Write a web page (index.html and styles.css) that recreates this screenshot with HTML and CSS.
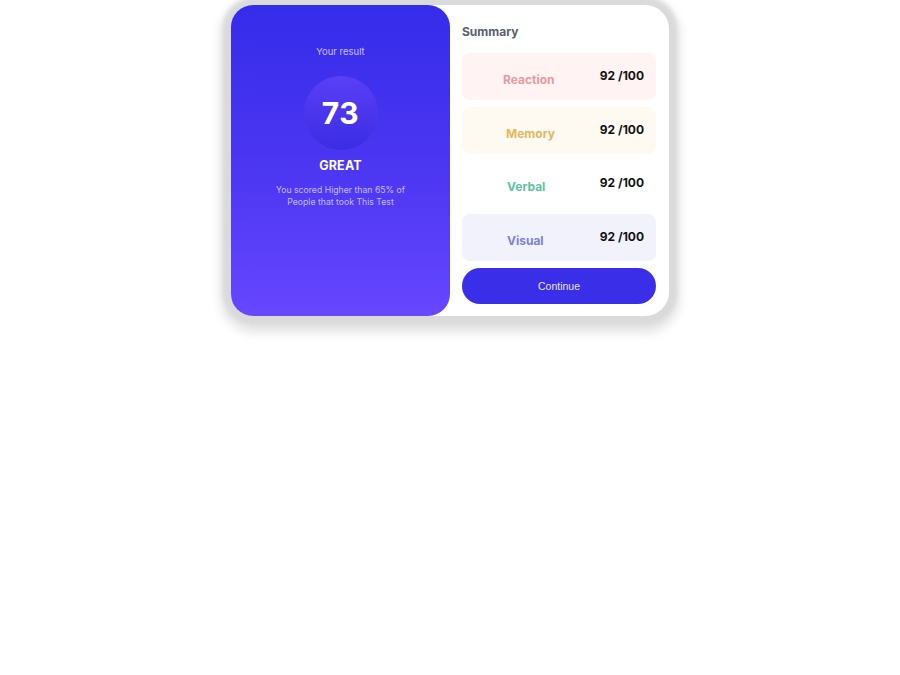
FILE: index.html
```html
<!DOCTYPE html>
<html>
<head>
<meta charset="utf-8">
<link rel="stylesheet" href="styles.css">
</head>
<body>
<div class="card">
  <section class="result">
    <p class="result-title">Your result</p>
    <div class="circle"><span class="score">73</span></div>
    <h2 class="grade">GREAT</h2>
    <p class="desc">You scored Higher than 65% of<br>People that took This Test</p>
  </section>
  <section class="summary">
    <h3 class="summary-title">Summary</h3>
    <div class="rows">
      <div class="row row-reaction"><span class="label">Reaction</span><span class="value">92 /100</span></div>
      <div class="row row-memory"><span class="label">Memory</span><span class="value">92 /100</span></div>
      <div class="row row-verbal"><span class="label">Verbal</span><span class="value">92 /100</span></div>
      <div class="row row-visual"><span class="label">Visual</span><span class="value">92 /100</span></div>
    </div>
    <button class="continue">Continue</button>
  </section>
</div>
</body>
</html>
```
FILE: styles.css
```css
* { box-sizing: border-box; }
html, body { margin: 0; padding: 0; background: #fff; }
body {
  font-family: "Inter", "Lato", sans-serif;
  min-height: 100vh;
  padding-top: 5px;
}

.card {
  width: 438px;
  height: 311px;
  margin: 0 auto;
  background: #fff;
  border-radius: 24px;
  display: flex;
  box-shadow: 0 0 4px 8px #dadada, 0 6px 12px 10px #e0e0e0;
}

.result {
  width: 219px;
  height: 100%;
  border-radius: 22px;
  background: linear-gradient(180deg, #352ce9 0%, #4d37f3 55%, #6747ff 100%);
  display: flex;
  flex-direction: column;
  align-items: center;
  color: #fff;
  padding-top: 40px;
}
.result-title {
  margin: 0;
  font-size: 9.5px;
  line-height: 13px;
  color: #c6c0ff;
}
.circle {
  margin-top: 18px;
  width: 74px;
  height: 74px;
  border-radius: 50%;
  background: linear-gradient(180deg, #5a3ff6 0%, #3a2de4 100%);
  display: flex;
  align-items: center;
  justify-content: center;
}
.score {
  font-size: 30px;
  font-weight: 700;
  letter-spacing: 0.5px;
}
.grade {
  margin: 8px 0 0;
  font-size: 12.5px;
  line-height: 16px;
  font-weight: 700;
  letter-spacing: 0.2px;
}
.desc {
  margin: 10px 0 0;
  font-size: 8.7px;
  line-height: 12px;
  text-align: center;
  color: #c4bcff;
}

.summary {
  flex: 1;
  padding: 19px 13px 13px 12px;
  display: flex;
  flex-direction: column;
}
.summary-title {
  margin: 0 0 13px;
  font-size: 12px;
  line-height: 16px;
  font-weight: 700;
  color: #5b5e6c;
}
.rows {
  display: flex;
  flex-direction: column;
  gap: 6.7px;
}
.row {
  flex-shrink: 0;
  height: 47px;
  border-radius: 8px;
  display: flex;
  align-items: center;
  justify-content: space-between;
  padding: 0 12px 0 41px;
}
.label {
  font-size: 12px;
  font-weight: 700;
  padding-top: 6px;
}
.value {
  font-size: 12px;
  font-weight: 700;
  color: #111;
  padding-bottom: 2px;
}
.row-reaction { background: #fff3f3; }
.row-reaction .label { color: #e89aa0; }
.row-memory { background: #fffaf1; padding-left: 44px; }
.row-memory .label { color: #e4b75f; }
.row-verbal { background: #fff; padding-left: 45px; }
.row-verbal .label { color: #5ec3a2; }
.row-visual { background: #f2f2fd; padding-left: 45px; }
.row-visual .label { color: #7b7fe3; }

.continue {
  flex-shrink: 0;
  margin-top: 7px;
  height: 36px;
  border: none;
  border-radius: 18px;
  background: #3a2ee8;
  color: #e8e6ff;
  font-family: "Liberation Sans", Arial, sans-serif;
  font-size: 10.5px;
}
```
